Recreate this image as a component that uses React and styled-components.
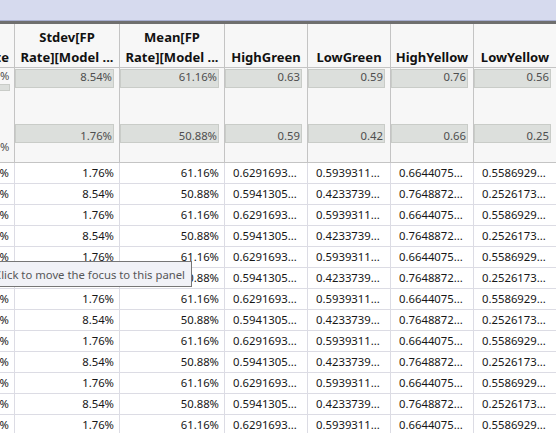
import React from 'react';
import styled, {createGlobalStyle} from 'styled-components';

const GlobalStyle = createGlobalStyle`
  html, body {
    margin: 0;
    padding: 0;
    background: #ffffff;
  }
  body {
    font-family: "Noto Sans", "Open Sans", sans-serif;
    overflow: hidden;
  }
`;

const columns = [
    {key: 'rate', title: ['', 'Rate'], width: 15, minLabel: '%', maxLabel: '%', narrow: true},
    {key: 'stdev', title: ['Stdev[FP', 'Rate][Model ...'], width: 105, max: '8.54%', min: '1.76%'},
    {key: 'mean', title: ['Mean[FP', 'Rate][Model ...'], width: 105, max: '61.16%', min: '50.88%'},
    {key: 'hg', title: ['', 'HighGreen'], width: 83, max: '0.63', min: '0.59', left: true},
    {key: 'lg', title: ['', 'LowGreen'], width: 83, max: '0.59', min: '0.42', left: true},
    {key: 'hy', title: ['', 'HighYellow'], width: 83, max: '0.76', min: '0.66', left: true},
    {key: 'ly', title: ['', 'LowYellow'], width: 83, max: '0.56', min: '0.25', left: true},
];

const rowA = ['1.76%', '1.76%', '61.16%', '0.6291693...', '0.5939311...', '0.6644075...', '0.5586929...'];
const rowB = ['8.54%', '8.54%', '50.88%', '0.5941305...', '0.4233739...', '0.7648872...', '0.2526173...'];
const rows = Array.from({length: 13}, (_, i) => (i % 2 === 0 ? rowA : rowB));

const template = columns.map(c => `${c.width}px`).join(' ');

const App = () => {
    return (
        <>
            <GlobalStyle/>
            <Page>
                <TitleBar/>
                <Splitter/>
                <Table>
                    <HeaderRow>
                        {columns.map(c => (
                            <HeaderCell key={c.key} narrow={c.narrow}>
                                <HeaderLine>{c.title[0]}</HeaderLine>
                                <HeaderLine>{c.title[1]}</HeaderLine>
                            </HeaderCell>
                        ))}
                    </HeaderRow>
                    <SummaryRow>
                        {columns.map(c => c.narrow ? (
                            <SummaryCell key={c.key}>
                                <NarrowLabel>{c.maxLabel}</NarrowLabel>
                                <NarrowBar/>
                                <NarrowLabel bottom>{c.minLabel}</NarrowLabel>
                            </SummaryCell>
                        ) : (
                            <SummaryCell key={c.key}>
                                <RangeBar>
                                    <RangeValue>{c.max}</RangeValue>
                                </RangeBar>
                                <RangeBar lower>
                                    <RangeValue lower>{c.min}</RangeValue>
                                </RangeBar>
                            </SummaryCell>
                        ))}
                    </SummaryRow>
                    {rows.map((r, i) => (
                        <DataRow key={i}>
                            {r.map((v, j) => (
                                <DataCell key={j} left={columns[j].left}>{v}</DataCell>
                            ))}
                        </DataRow>
                    ))}
                    <Tooltip>Click to move the focus to this panel</Tooltip>
                </Table>
            </Page>
        </>
    )
}

const Page = styled.div`
  width: 556px;
  height: 433px;
  overflow: hidden;
  display: flex;
  flex-direction: column;
`;

const TitleBar = styled.div`
  height: 20px;
  flex: none;
  background: #d6daee;
  border-bottom: 1px solid #a7aed0;
`;

const Splitter = styled.div`
  height: 3px;
  flex: none;
  background: #6f6f6f;
`;

const Table = styled.div`
  position: relative;
  flex: 1;
  width: 557px;
`;

const GridRow = styled.div`
  display: grid;
  grid-template-columns: ${template};
`;

const HeaderRow = styled(GridRow)`
  background: #f7f7f7;
  border-bottom: 1px solid #c4c4c4;
  box-sizing: border-box;
  height: 44px;
`;

const HeaderCell = styled.div`
  display: flex;
  flex-direction: column;
  justify-content: flex-end;
  align-items: ${props => props.narrow ? 'flex-end' : 'center'};
  padding: 0 ${props => props.narrow ? '5px' : '2px'} 0;
  border-right: 1px solid #c4c4c4;
  overflow: hidden;
  white-space: nowrap;
`;

const HeaderLine = styled.div`
  font-size: 13px;
  font-weight: 700;
  color: #111111;
  line-height: 20px;
  height: 20px;
`;

const SummaryRow = styled(GridRow)`
  height: 95px;
  box-sizing: border-box;
  background: #f7f7f7;
  border-bottom: 1px solid #c4c4c4;
`;

const SummaryCell = styled.div`
  display: flex;
  flex-direction: column;
  border-right: 1px solid #c4c4c4;
  overflow: hidden;
  padding-top: 1px;
`;

const RangeBar = styled.div`
  height: 19px;
  box-sizing: border-box;
  margin: ${props => props.lower ? '36px' : '0'} 5px 0 0;
  background: #dcdfdc;
  border: 1px solid #c9ccc8;
  display: flex;
  align-items: ${props => props.lower ? 'flex-end' : 'flex-start'};
  justify-content: flex-end;
  padding-right: 1px;
`;

const RangeValue = styled.span`
  font-size: 11.3px;
  line-height: 14px;
  color: #4e4e4e;
  margin-bottom: ${props => props.lower ? '-1px' : '0'};
`;

const NarrowLabel = styled.div`
  font-size: 11.3px;
  line-height: 14px;
  color: #4e4e4e;
  text-align: right;
  padding-right: 6px;
  margin-top: ${props => props.bottom ? 'auto' : '0'};
  margin-bottom: ${props => props.bottom ? '8px' : '0'};
`;

const NarrowBar = styled.div`
  height: 7px;
  width: 10px;
  margin-top: 1px;
  background: #dcdfdc;
  border: 1px solid #c9ccc8;
  border-left: none;
  box-sizing: border-box;
`;

const DataRow = styled(GridRow)`
  height: 21px;
  box-sizing: border-box;
  border-bottom: 1px solid #dcdce4;
  background: #ffffff;
`;

const DataCell = styled.div`
  display: flex;
  align-items: center;
  justify-content: ${props => props.left ? 'flex-start' : 'flex-end'};
  font-size: 11.3px;
  line-height: 20px;
  color: #161616;
  white-space: nowrap;
  overflow: hidden;
  padding: ${props => props.left ? '0 0 0 8px' : '0 5px 0 0'};
  border-right: 1px solid #dcdce4;
`;

const Tooltip = styled.div`
  position: absolute;
  left: -13px;
  top: 237px;
  height: 26px;
  box-sizing: border-box;
  padding: 0 6px;
  display: flex;
  align-items: center;
  background: #f1f2f7;
  border: 1px solid #767676;
  font-size: 11.3px;
  color: #575757;
  white-space: nowrap;
`;

export default App;
